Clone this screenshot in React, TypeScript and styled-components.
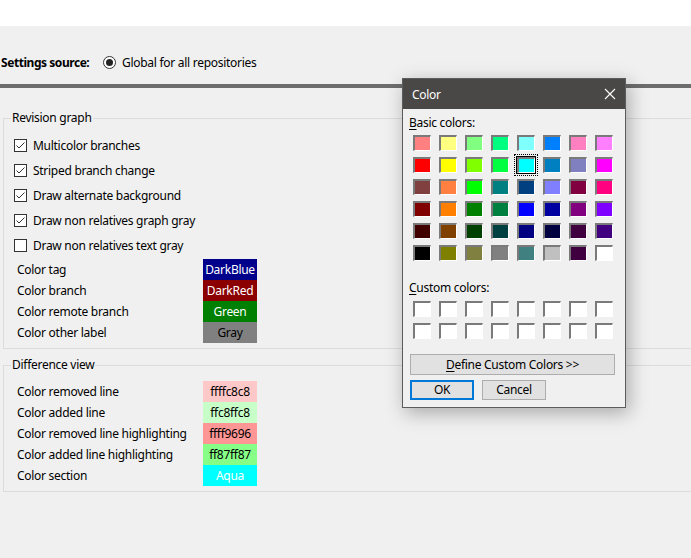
import React from "react";
import styled, { createGlobalStyle } from "styled-components";

const GlobalStyle = createGlobalStyle`
  html, body { margin: 0; padding: 0; }
  body {
    background: #f0f0f0;
    font-family: "Segoe UI", "Noto Sans", "DejaVu Sans", sans-serif;
    font-size: 12px;
    letter-spacing: -0.28px;
    color: #000;
  }
`;

const Page = styled.div`
  position: relative;
  width: 691px;
  height: 558px;
  overflow: hidden;
  background: #f0f0f0;
`;

const TopBar = styled.div`
  height: 26px;
  background: #fff;
`;

const SourceRow = styled.div`
  height: 58px;
  box-sizing: border-box;
  padding: 29px 0 0 1px;
  display: flex;
  align-items: flex-start;
  line-height: 16px;
`;

const SourceLabel = styled.span`
  font-weight: bold;
  letter-spacing: -0.45px;
  width: 102px;
`;

const Radio = styled.span`
  width: 13px;
  height: 13px;
  box-sizing: border-box;
  border: 1px solid #333;
  border-radius: 50%;
  background: #fff;
  display: inline-flex;
  align-items: center;
  justify-content: center;
  margin: 1px 6px 0 0;
  &::after {
    content: "";
    width: 7px;
    height: 7px;
    border-radius: 50%;
    background: #222;
  }
`;

const Divider = styled.div`
  height: 4px;
  background: #6d6d6d;
`;

const Content = styled.div`
  padding: 22px 0 0 3px;
  display: flex;
  flex-direction: column;
  gap: 8px;
`;

const Group = styled.fieldset<{ $pt: number }>`
  margin: 0;
  border: 1px solid #dcdcdc;
  border-right: none;
  padding: ${(p) => p.$pt}px 0 5px 0;
  min-width: 0;
`;

const Legend = styled.legend`
  margin-left: 7px;
  padding: 0 1px;
  line-height: 16px;
  color: #000;
`;

const CheckRow = styled.div`
  height: 25px;
  display: flex;
  align-items: center;
  padding-left: 10px;
`;

const Box = styled.span`
  width: 13px;
  height: 13px;
  box-sizing: border-box;
  border: 1px solid #333;
  background: #fff;
  margin-right: 6px;
  display: inline-flex;
  svg { display: block; }
`;

const Spacer = styled.div`
  height: 1px;
`;

const ColorGrid = styled.div`
  display: grid;
  grid-template-columns: 186px 54px;
  grid-auto-rows: 21px;
  padding-left: 13px;
`;

const ColorLabel = styled.div`
  display: flex;
  align-items: center;
`;

const ColorValue = styled.div<{ $bg: string; $fg: string }>`
  background: ${(p) => p.$bg};
  color: ${(p) => p.$fg};
  display: flex;
  align-items: center;
  justify-content: center;
`;

/* ---------- Color dialog ---------- */

const Dialog = styled.div`
  position: absolute;
  left: 402px;
  top: 78px;
  width: 224px;
  height: 330px;
  box-sizing: border-box;
  border: 1px solid #5c5c5c;
  background: #f0f0f0;
  box-shadow: 3px 5px 18px rgba(0, 0, 0, 0.3);
  display: flex;
  flex-direction: column;
`;

const TitleBar = styled.div`
  height: 30px;
  flex: none;
  background: #4a4846;
  color: #fff;
  display: flex;
  align-items: center;
  justify-content: space-between;
  padding: 0 9px 0 9px;
  font-size: 12px;
`;

const DialogBody = styled.div`
  padding: 6px 0 0 6px;
  display: flex;
  flex-direction: column;
  line-height: 16px;
`;

const U = styled.span`
  text-decoration: underline;
  text-underline-offset: 2px;
`;

const SwatchGrid = styled.div<{ $mt: number }>`
  display: grid;
  grid-template-columns: repeat(8, 18px);
  grid-auto-rows: 16px;
  column-gap: 8px;
  row-gap: 6px;
  margin: ${(p) => p.$mt}px 0 0 4px;
`;

const Swatch = styled.div<{ $c: string; $sel?: boolean }>`
  box-sizing: border-box;
  border-top: 2px solid #7a7a7a;
  border-left: 2px solid #7a7a7a;
  border-right: 1px solid #fff;
  border-bottom: 1px solid #fff;
  background: ${(p) => p.$c};
  position: relative;
  ${(p) =>
    p.$sel
      ? `
    box-shadow: 0 0 0 1px #000;
    outline: 1px dotted #000;
    outline-offset: 2px;
  `
      : ""}
`;

const SubLabel = styled.div<{ $mt: number }>`
  margin-top: ${(p) => p.$mt}px;
`;

const WideButton = styled.div`
  margin: 15px 0 0 1px;
  width: 205px;
  height: 21px;
  box-sizing: border-box;
  border: 1px solid #adadad;
  background: #e1e1e1;
  display: flex;
  align-items: center;
  justify-content: center;
`;

const ButtonRow = styled.div`
  display: flex;
  gap: 8px;
  margin: 5px 0 0 1px;
`;

const Button = styled.div<{ $default?: boolean }>`
  width: 64px;
  height: 20px;
  box-sizing: border-box;
  border: ${(p) => (p.$default ? "2px solid #0078d7" : "1px solid #adadad")};
  background: #e1e1e1;
  display: flex;
  align-items: center;
  justify-content: center;
`;

const basic = [
  ["#FF8080", "#FFFF80", "#80FF80", "#00FF80", "#80FFFF", "#0080FF", "#FF80C0", "#FF80FF"],
  ["#FF0000", "#FFFF00", "#80FF00", "#00FF40", "#00FFFF", "#0080C0", "#8080C0", "#FF00FF"],
  ["#804040", "#FF8040", "#00FF00", "#008080", "#004080", "#8080FF", "#800040", "#FF0080"],
  ["#800000", "#FF8000", "#008000", "#008040", "#0000FF", "#0000A0", "#800080", "#8000FF"],
  ["#400000", "#804000", "#004000", "#004040", "#000080", "#000040", "#400040", "#400080"],
  ["#000000", "#808000", "#808040", "#808080", "#408080", "#C0C0C0", "#400040", "#FFFFFF"],
];

const checks: [string, boolean][] = [
  ["Multicolor branches", true],
  ["Striped branch change", true],
  ["Draw alternate background", true],
  ["Draw non relatives graph gray", true],
  ["Draw non relatives text gray", false],
];

const graphColors: [string, string, string, string][] = [
  ["Color tag", "DarkBlue", "#00008b", "#fff"],
  ["Color branch", "DarkRed", "#8b0000", "#fff"],
  ["Color remote branch", "Green", "#008000", "#fff"],
  ["Color other label", "Gray", "#808080", "#000"],
];

const diffColors: [string, string, string, string][] = [
  ["Color removed line", "ffffc8c8", "#ffc8c8", "#000"],
  ["Color added line", "ffc8ffc8", "#c8ffc8", "#000"],
  ["Color removed line highlighting", "ffff9696", "#ff9696", "#000"],
  ["Color added line highlighting", "ff87ff87", "#87ff87", "#000"],
  ["Color section", "Aqua", "#00ffff", "#fff"],
];

function Check({ checked }: { checked: boolean }) {
  return (
    <Box>
      {checked && (
        <svg width="11" height="11" viewBox="0 0 11 11">
          <polyline points="1.5,5.5 4,8 9.5,2.5" fill="none" stroke="#333" strokeWidth="1" />
        </svg>
      )}
    </Box>
  );
}

function ColorRows({ rows }: { rows: [string, string, string, string][] }) {
  return (
    <ColorGrid>
      {rows.map(([l, v, bg, fg]) => (
        <React.Fragment key={l}>
          <ColorLabel>{l}</ColorLabel>
          <ColorValue $bg={bg} $fg={fg}>{v}</ColorValue>
        </React.Fragment>
      ))}
    </ColorGrid>
  );
}

export default function App() {
  return (
    <Page>
      <GlobalStyle />
      <TopBar />
      <SourceRow>
        <SourceLabel>Settings source:</SourceLabel>
        <Radio />
        <span>Global for all repositories</span>
      </SourceRow>
      <Divider />
      <Content>
        <Group $pt={7}>
          <Legend>Revision graph</Legend>
          {checks.map(([t, c]) => (
            <CheckRow key={t}>
              <Check checked={c} />
              {t}
            </CheckRow>
          ))}
          <Spacer />
          <ColorRows rows={graphColors} />
        </Group>
        <Group $pt={8}>
          <Legend>Difference view</Legend>
          <ColorRows rows={diffColors} />
        </Group>
      </Content>

      <Dialog>
        <TitleBar>
          <span>Color</span>
          <svg width="12" height="12" viewBox="0 0 12 12">
            <path d="M1 1 L11 11 M11 1 L1 11" stroke="#fff" strokeWidth="1.1" />
          </svg>
        </TitleBar>
        <DialogBody>
          <div>
            <U>B</U>asic colors:
          </div>
          <SwatchGrid $mt={4}>
            {basic.flatMap((row, r) =>
              row.map((c, i) => <Swatch key={`${r}-${i}`} $c={c} $sel={r === 1 && i === 4} />)
            )}
          </SwatchGrid>
          <SubLabel $mt={19}>
            <U>C</U>ustom colors:
          </SubLabel>
          <SwatchGrid $mt={5}>
            {Array.from({ length: 16 }).map((_, i) => (
              <Swatch key={i} $c="#fff" />
            ))}
          </SwatchGrid>
          <WideButton>
            <span>
              <U>D</U>efine Custom Colors &gt;&gt;
            </span>
          </WideButton>
          <ButtonRow>
            <Button $default>OK</Button>
            <Button>Cancel</Button>
          </ButtonRow>
        </DialogBody>
      </Dialog>
    </Page>
  );
}
